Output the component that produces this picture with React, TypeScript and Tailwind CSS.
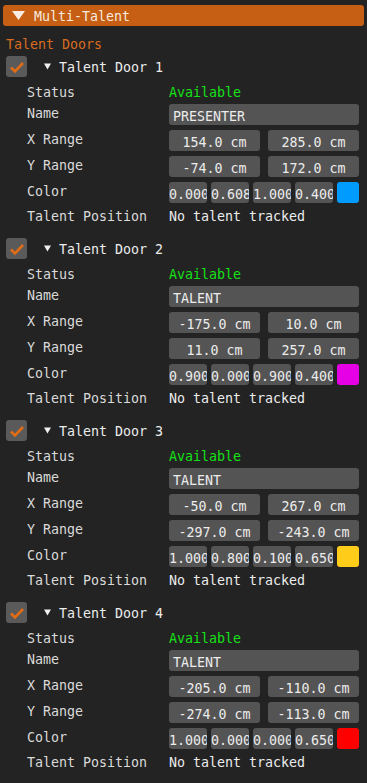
import React from 'react';

interface Door {
  name: string;
  x: [string, string];
  y: [string, string];
  color: [string, string, string, string];
  swatch: string;
}

const doors: Door[] = [
  { name: 'PRESENTER', x: ['154.0 cm', '285.0 cm'], y: ['-74.0 cm', '172.0 cm'], color: ['0.000', '0.608', '1.000', '0.400'], swatch: '#009bff' },
  { name: 'TALENT', x: ['-175.0 cm', '10.0 cm'], y: ['11.0 cm', '257.0 cm'], color: ['0.900', '0.000', '0.900', '0.400'], swatch: '#e600e6' },
  { name: 'TALENT', x: ['-50.0 cm', '267.0 cm'], y: ['-297.0 cm', '-243.0 cm'], color: ['1.000', '0.800', '0.100', '0.650'], swatch: '#ffcc1a' },
  { name: 'TALENT', x: ['-205.0 cm', '-110.0 cm'], y: ['-274.0 cm', '-113.0 cm'], color: ['1.000', '0.000', '0.000', '0.650'], swatch: '#ff0000' },
];

const Label = ({ children }: { children: React.ReactNode }) => (
  <div className="w-[142px] shrink-0 pt-[2px] text-[#dadada]">{children}</div>
);

const Frame = ({ children, className = '' }: { children: React.ReactNode; className?: string }) => (
  <div className={`h-[21px] rounded-[3px] bg-[#545454] pt-[5px] overflow-hidden whitespace-nowrap text-[#ececec] ${className}`}>
    {children}
  </div>
);

const RangeRow = ({ label, values }: { label: string; values: [string, string] }) => (
  <div className="flex mt-[5px]">
    <Label>{label}</Label>
    <div className="flex gap-[8px] w-[190px]">
      <Frame className="w-[91px] text-center">{values[0]}</Frame>
      <Frame className="w-[91px] text-center">{values[1]}</Frame>
    </div>
  </div>
);

const DoorBlock = ({ door, index }: { door: Door; index: number }) => (
  <div className={index === 0 ? 'mt-[3px]' : 'mt-[13px]'}>
    <div className="flex items-center h-[21px]">
      <div className="ml-[6px] w-[21px] h-[21px] rounded-[3px] bg-[#5a5a5a] flex items-center justify-center">
        <svg width="21" height="21" viewBox="0 0 21 21">
          <polyline points="5,11.5 9,15.5 17,7" fill="none" stroke="#e06c16" strokeWidth="2.6" />
        </svg>
      </div>
      <svg className="ml-[17px]" width="7" height="7" viewBox="0 0 7 7">
        <polygon points="0,0.5 7,0.5 3.5,6.5" fill="#f0f0f0" />
      </svg>
      <span className="ml-[8px] mt-[2px] text-[#ececec]">Talent Door {index + 1}</span>
    </div>
    <div className="pl-[27px]">
      <div className="flex mt-[8px] h-[16px]">
        <div className="w-[142px] shrink-0 text-[#dadada]">Status</div>
        <div className="text-[#16e016]">Available</div>
      </div>
      <div className="flex mt-[3px]">
        <Label>Name</Label>
        <Frame className="w-[190px] pl-[4px]">{door.name}</Frame>
      </div>
      <RangeRow label="X Range" values={door.x} />
      <RangeRow label="Y Range" values={door.y} />
      <div className="flex mt-[5px]">
        <Label>Color</Label>
        <div className="flex gap-[4px] w-[190px]">
          {door.color.map((c, i) => (
            <Frame key={i} className="w-[38px]">{c}</Frame>
          ))}
          <div className="w-[22px] h-[21px] rounded-[3px]" style={{ backgroundColor: door.swatch }} />
        </div>
      </div>
      <div className="flex mt-[6px] h-[16px]">
        <div className="w-[142px] shrink-0 text-[#dadada]">Talent Position</div>
        <div className="text-[#ececec]">No talent tracked</div>
      </div>
    </div>
  </div>
);

export default function App() {
  return (
    <div className="w-[367px] h-[783px] overflow-hidden bg-[#232323] text-[13.3px] leading-[16px] font-['DejaVu_Sans_Mono',monospace] pt-[5px]">
      <div className="mx-[3px] h-[21px] rounded-[3px] bg-[#c65f14] flex items-center">
        <svg className="ml-[9px]" width="13" height="9" viewBox="0 0 13 9">
          <polygon points="0,0 13,0 6.5,9" fill="#f8ede4" />
        </svg>
        <span className="ml-[9px] mt-[2px] text-[#f6e9de]">Multi-Talent</span>
      </div>
      <div className="mt-[11px] pl-[6px] h-[16px] text-[#d86c1f]">Talent Doors</div>
      {doors.map((d, i) => (
        <DoorBlock key={i} door={d} index={i} />
      ))}
    </div>
  );
}
